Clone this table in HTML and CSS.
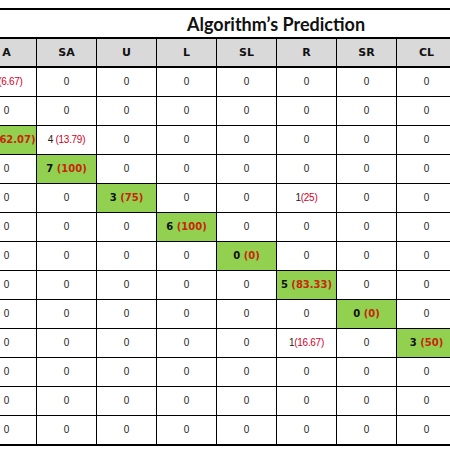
FILE: index.html
```html
<!DOCTYPE html>
<html lang="en">

<head>
    <meta charset="UTF-8">
    <title>Algorithm's Prediction</title>
    <link rel="stylesheet" href="styles.css">
</head>

<body>
    <div class="sheet">
        <div class="title">Algorithm’s Prediction</div>

        <div class="row head">
            <div class="cell">A</div>
            <div class="cell">SA</div>
            <div class="cell">U</div>
            <div class="cell">L</div>
            <div class="cell">SL</div>
            <div class="cell">R</div>
            <div class="cell">SR</div>
            <div class="cell">CL</div>
        </div>

        <div class="row">
            <div class="cell">1 <span class="pct">(6.67)</span></div>
            <div class="cell">0</div><div class="cell">0</div><div class="cell">0</div>
            <div class="cell">0</div><div class="cell">0</div><div class="cell">0</div><div class="cell">0</div>
        </div>
        <div class="row">
            <div class="cell">0</div><div class="cell">0</div><div class="cell">0</div><div class="cell">0</div>
            <div class="cell">0</div><div class="cell">0</div><div class="cell">0</div><div class="cell">0</div>
        </div>
        <div class="row">
            <div class="cell hit">18 <span class="pct">(62.07)</span></div>
            <div class="cell">4 <span class="pct">(13.79)</span></div>
            <div class="cell">0</div><div class="cell">0</div>
            <div class="cell">0</div><div class="cell">0</div><div class="cell">0</div><div class="cell">0</div>
        </div>
        <div class="row">
            <div class="cell">0</div>
            <div class="cell hit">7 <span class="pct">(100)</span></div>
            <div class="cell">0</div><div class="cell">0</div>
            <div class="cell">0</div><div class="cell">0</div><div class="cell">0</div><div class="cell">0</div>
        </div>
        <div class="row">
            <div class="cell">0</div><div class="cell">0</div>
            <div class="cell hit">3 <span class="pct">(75)</span></div>
            <div class="cell">0</div><div class="cell">0</div>
            <div class="cell">1<span class="pct">(25)</span></div>
            <div class="cell">0</div><div class="cell">0</div>
        </div>
        <div class="row">
            <div class="cell">0</div><div class="cell">0</div><div class="cell">0</div>
            <div class="cell hit">6 <span class="pct">(100)</span></div>
            <div class="cell">0</div><div class="cell">0</div><div class="cell">0</div><div class="cell">0</div>
        </div>
        <div class="row">
            <div class="cell">0</div><div class="cell">0</div><div class="cell">0</div><div class="cell">0</div>
            <div class="cell hit">0 <span class="pct">(0)</span></div>
            <div class="cell">0</div><div class="cell">0</div><div class="cell">0</div>
        </div>
        <div class="row">
            <div class="cell">0</div><div class="cell">0</div><div class="cell">0</div><div class="cell">0</div>
            <div class="cell">0</div>
            <div class="cell hit">5 <span class="pct">(83.33)</span></div>
            <div class="cell">0</div><div class="cell">0</div>
        </div>
        <div class="row">
            <div class="cell">0</div><div class="cell">0</div><div class="cell">0</div><div class="cell">0</div>
            <div class="cell">0</div><div class="cell">0</div>
            <div class="cell hit">0 <span class="pct">(0)</span></div>
            <div class="cell">0</div>
        </div>
        <div class="row">
            <div class="cell">0</div><div class="cell">0</div><div class="cell">0</div><div class="cell">0</div>
            <div class="cell">0</div>
            <div class="cell">1<span class="pct">(16.67)</span></div>
            <div class="cell">0</div>
            <div class="cell hit">3 <span class="pct">(50)</span></div>
        </div>
        <div class="row">
            <div class="cell">0</div><div class="cell">0</div><div class="cell">0</div><div class="cell">0</div>
            <div class="cell">0</div><div class="cell">0</div><div class="cell">0</div><div class="cell">0</div>
        </div>
        <div class="row">
            <div class="cell">0</div><div class="cell">0</div><div class="cell">0</div><div class="cell">0</div>
            <div class="cell">0</div><div class="cell">0</div><div class="cell">0</div><div class="cell">0</div>
        </div>
        <div class="row">
            <div class="cell">0</div><div class="cell">0</div><div class="cell">0</div><div class="cell">0</div>
            <div class="cell">0</div><div class="cell">0</div><div class="cell">0</div><div class="cell">0</div>
        </div>
    </div>
</body>

</html>
```

FILE: styles.css
```css
body {
    margin: 0;
    padding-top: 8px;
    background-color: #fff;
    overflow: hidden;
}

/* sheet is wider than the window, first column starts off screen */
.sheet {
    width: 480px;
    margin-left: -23px;
}

.title {
    box-sizing: border-box;
    height: 31px;
    border-top: 2px solid #000;
    border-bottom: 2px solid #000;
    padding-left: 210px;
    padding-top: 1px;
    font-family: Lato, "Open Sans", sans-serif;
    font-weight: bold;
    font-size: 18px;
    line-height: 26px;
    color: #111;
}

.row {
    display: grid;
    grid-template-columns: repeat(8, 60px);
}

.cell {
    box-sizing: border-box;
    height: 29px;
    border-right: 1px solid #000;
    border-bottom: 1px solid #000;
    text-align: center;
    line-height: 28px;
    white-space: nowrap;
    font-family: "Liberation Sans", Arial, sans-serif;
    font-size: 10px;
    letter-spacing: -0.3px;
    color: #222;
}

.head .cell {
    background-color: #d9d9d9;
    border-bottom-width: 2px;
    line-height: 27px;
    font-family: "DejaVu Sans", Verdana, sans-serif;
    font-weight: bold;
    font-size: 11px;
    letter-spacing: 0;
    color: #111;
}

.row:last-child .cell {
    height: 30px;
    border-bottom-width: 2px;
}

.pct {
    color: #d4001f;
}

.hit {
    background-color: #92d050;
    font-family: "DejaVu Sans", Verdana, sans-serif;
    font-weight: bold;
    font-size: 10px;
    letter-spacing: 0;
    color: #111;
}

.hit .pct {
    color: #c8260c;
}
```
